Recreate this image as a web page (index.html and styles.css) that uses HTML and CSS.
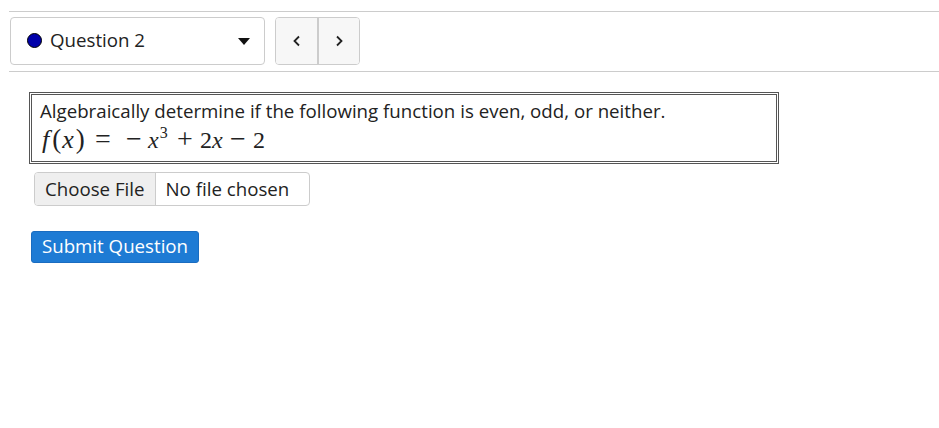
FILE: index.html
```html
<!DOCTYPE html>
<html>
<head>
<meta charset="utf-8">
<link rel="stylesheet" href="styles.css">
</head>
<body>
<div class="page">
  <div class="toolbar">
    <div class="select">
      <span class="dot"></span>
      <span class="qlabel">Question 2</span>
      <span class="caret"></span>
    </div>
    <div class="nav">
      <button class="navbtn"><svg width="10" height="12" viewBox="0 0 10 12"><path d="M7 1.5 L2.5 6 L7 10.5" fill="none" stroke="#222" stroke-width="1.8"/></svg></button>
      <button class="navbtn"><svg width="10" height="12" viewBox="0 0 10 12"><path d="M3 1.5 L7.5 6 L3 10.5" fill="none" stroke="#222" stroke-width="1.8"/></svg></button>
    </div>
  </div>
  <div class="content">
    <div class="qbox">
      <div class="qtext">Algebraically determine if the following function is even, odd, or neither.</div>
      <div class="math">
        <span class="t t-fx"><i class="ff">f</i><span class="par">(</span><i class="fx">x</i><span class="par">)</span></span>
        <span class="t t-eq op">=</span>
        <span class="t t-neg op">−</span>
        <span class="t t-x3"><i>x</i><sup>3</sup></span>
        <span class="t t-plus op">+</span>
        <span class="t t-2x">2<i>x</i></span>
        <span class="t t-minus op">−</span>
        <span class="t">2</span>
      </div>
    </div>
    <div class="file">
      <span class="choose">Choose File</span><span class="nofile">No file chosen</span>
    </div>
    <button class="submit">Submit Question</button>
  </div>
</div>
</body>
</html>
```
FILE: styles.css
```css
html, body { margin: 0; padding: 0; background: #fff; }
body { font-family: "Open Sans", sans-serif; color: #222; }
.page { padding: 11px 0 0 9px; }
.toolbar {
  border-top: 1px solid #ccc;
  border-bottom: 1px solid #ccc;
  padding: 5px 0 6px 1px;
  display: flex;
  gap: 10px;
}
.select {
  height: 48px; width: 255px;
  border: 1px solid #ccc; border-radius: 4px;
  display: flex; align-items: center;
  padding: 0 0 3px 16px; box-sizing: border-box;
  font-size: 18.7px;
}
.dot {
  width: 15px; height: 15px; border-radius: 50%;
  background: #0000aa; border: 1px solid #000; box-sizing: border-box;
  margin: 2px 8px 0 0;
}
.qlabel { flex: 1; }
.caret {
  width: 0; height: 0;
  border-left: 6px solid transparent; border-right: 6px solid transparent;
  border-top: 7px solid #111;
  margin: 3px 14px 0 0;
}
.nav {
  display: flex; border: 1px solid #ccc; border-radius: 4px; overflow: hidden;
  height: 48px; box-sizing: border-box; width: 85px;
}
.navbtn {
  width: 42px; border: none; background: #f7f7f7; padding: 0;
  display: flex; align-items: center; justify-content: center;
}
.navbtn + .navbtn { border-left: 2px solid #ccc; }
.content { padding: 20px 0 0 20px; }
.qbox {
  width: 750px; box-sizing: border-box;
  border: 3px double #555;
  padding: 2px 8px 4px 8px;
  font-size: 18.7px;
}
.qtext { line-height: 27px; height: 27px; }
.math {
  display: flex; align-items: baseline;
  font-family: "Liberation Serif", serif; font-size: 24px; line-height: 30px;
  height: 33px; overflow: visible;
  padding-left: 2px;
}
.t { display: inline-block; white-space: nowrap; }
.t-fx { width: 53px; font-size: 26px; }
.ff { margin-right: 3px; }
.fx { margin: 0 2px 0 1px; }
.par { font-size: 27px; }
.t-eq { width: 31px; }
.t-neg { width: 22px; }
.t-x3 { width: 29px; }
.t-plus { width: 23px; }
.t-2x { width: 30px; }
.t-minus { width: 23px; }
.op { font-size: 28px; }
.math sup { font-size: 16px; vertical-align: 10px; line-height: 0; margin-left: 1px; }
.file {
  margin: 8px 0 0 5px;
  display: flex; width: 276px; height: 34px; box-sizing: border-box;
  border: 1px solid #ccc; border-radius: 4px; overflow: hidden;
  font-size: 18.7px; align-items: stretch;
}
.choose {
  background: #efefef; border-right: 1px solid #ccc;
  padding: 0 10px 2px; display: flex; align-items: center;
}
.nofile { padding: 0 10px 2px; display: flex; align-items: center; }
.submit {
  display: block; margin: 25px 0 0 2px;
  background: #1e7bd4; color: #fff; border: 1px solid #1a6cc0; border-radius: 3px;
  font-family: "Open Sans", sans-serif; font-size: 18.7px;
  height: 32px; width: 168px; padding: 0 0 3px;
}
```
